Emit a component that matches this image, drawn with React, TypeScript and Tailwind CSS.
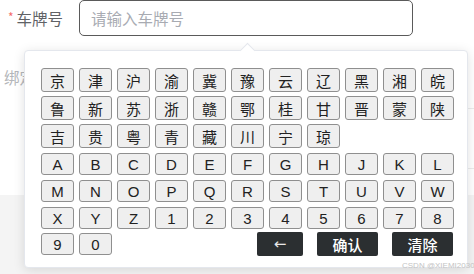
import React from "react";

const CN = ["京","津","沪","渝","冀","豫","云","辽","黑","湘","皖","鲁","新","苏","浙","赣","鄂","桂","甘","晋","蒙","陕","吉","贵","粤","青","藏","川","宁","琼"];
const LETTERS = ["A","B","C","D","E","F","G","H","J","K","L","M","N","O","P","Q","R","S","T","U","V","W","X","Y","Z","1","2","3","4","5","6","7","8"];

function chunk<T>(arr: T[], n: number): T[][] {
  const out: T[][] = [];
  for (let i = 0; i < arr.length; i += n) out.push(arr.slice(i, i + n));
  return out;
}

const cnFont = { fontFamily: '"Noto Sans CJK SC", "Noto Sans", sans-serif' };
const latFont = { fontFamily: '"Liberation Sans", Arial, sans-serif' };

function Key({ k, cn }: { k: string; cn?: boolean }) {
  return (
    <div
      className={`w-[33px] ${cn ? "h-[24px]" : "h-[22px]"} text-[15px] flex items-center justify-center rounded-[3px] border border-[#8f8f8f] bg-[#efefef] text-[#222] leading-none`}
      style={cn ? cnFont : latFont}
    >
      {k}
    </div>
  );
}

export default function App() {
  const cnRows = chunk(CN, 11);
  const letterRows = chunk(LETTERS, 11);
  return (
    <div className="relative w-[474px] h-[274px] overflow-hidden bg-white" style={cnFont}>
      {/* underlying form */}
      <div className="flex flex-col">
        <div className="flex items-center h-[36px]">
          <div className="w-[79px] flex items-center pl-[8px] pt-[2px]">
            <span className="text-[#f56c6c] text-[12px] mr-[3px] -mt-[4px]">*</span>
            <span className="text-[15.5px] text-[#606266]">车牌号</span>
          </div>
          <div className="w-[334px] h-[36px] rounded-[5px] border border-[#5a5a5a] flex items-center pl-[11px] pt-[2px]">
            <span className="text-[15.5px] text-[#a8abb2]">请输入车牌号</span>
          </div>
        </div>
        <div className="h-[30px]" />
        <div className="h-[42px] pl-[4px] text-[15.5px] text-[#b4b6ba]">绑定</div>
        <div className="h-[60px] ml-[120px] border-t border-[#ececec]" />
        <div className="h-[27px] ml-[120px] border-t border-[#ececec]" />
        <div className="h-[80px] bg-[#f4f4f4]" />
      </div>

      {/* keyboard popover */}
      <div className="absolute left-[24px] top-[50px] w-[444px] h-[218px] rounded-[4px] border border-[#e4e7ed] bg-white shadow-[0_2px_12px_rgba(0,0,0,0.12)] pt-[17px] pl-[16px]">
        <div className="absolute -top-[6px] left-[217px] w-[11px] h-[11px] rotate-45 bg-white border-t border-l border-[#e4e7ed]" />
        <div className="w-[413px] flex flex-col">
          <div className="flex flex-col gap-[4px]">
            {cnRows.map((row, i) => (
              <div key={i} className="flex gap-[5px]">
                {row.map((k) => (
                  <Key key={k} k={k} cn />
                ))}
              </div>
            ))}
          </div>
          <div className="flex flex-col gap-[5px] mt-[5px]">
            {letterRows.map((row, i) => (
              <div key={i} className="flex gap-[5px]">
                {row.map((k) => (
                  <Key key={k} k={k} />
                ))}
              </div>
            ))}
          </div>
          <div className="flex items-center mt-[3px] h-[24px]">
            <div className="flex gap-[5px]">
              <Key k="9" />
              <Key k="0" />
            </div>
            <div className="ml-auto mr-[1px] flex gap-[14px]">
              <div
                className="w-[46px] h-[24px] rounded-[2px] bg-[#2b2f31] text-[#e8e8e8] flex items-center justify-center text-[15px] leading-none"
                style={{ fontFamily: '"DejaVu Sans", sans-serif' }}
              >
                ←
              </div>
              <div className="w-[61px] h-[24px] rounded-[2px] bg-[#2b2f31] text-white flex items-center justify-center text-[15px] font-medium leading-none">
                确认
              </div>
              <div className="w-[61px] h-[24px] rounded-[2px] bg-[#2b2f31] text-white flex items-center justify-center text-[15px] font-medium leading-none">
                清除
              </div>
            </div>
          </div>
        </div>
      </div>

      {/* watermark */}
      <div
        className="absolute left-[402px] top-[262px] text-[8px] leading-none text-[#c4c4c4] whitespace-nowrap"
        style={latFont}
      >
        CSDN @XIEMI2030
      </div>
    </div>
  );
}
